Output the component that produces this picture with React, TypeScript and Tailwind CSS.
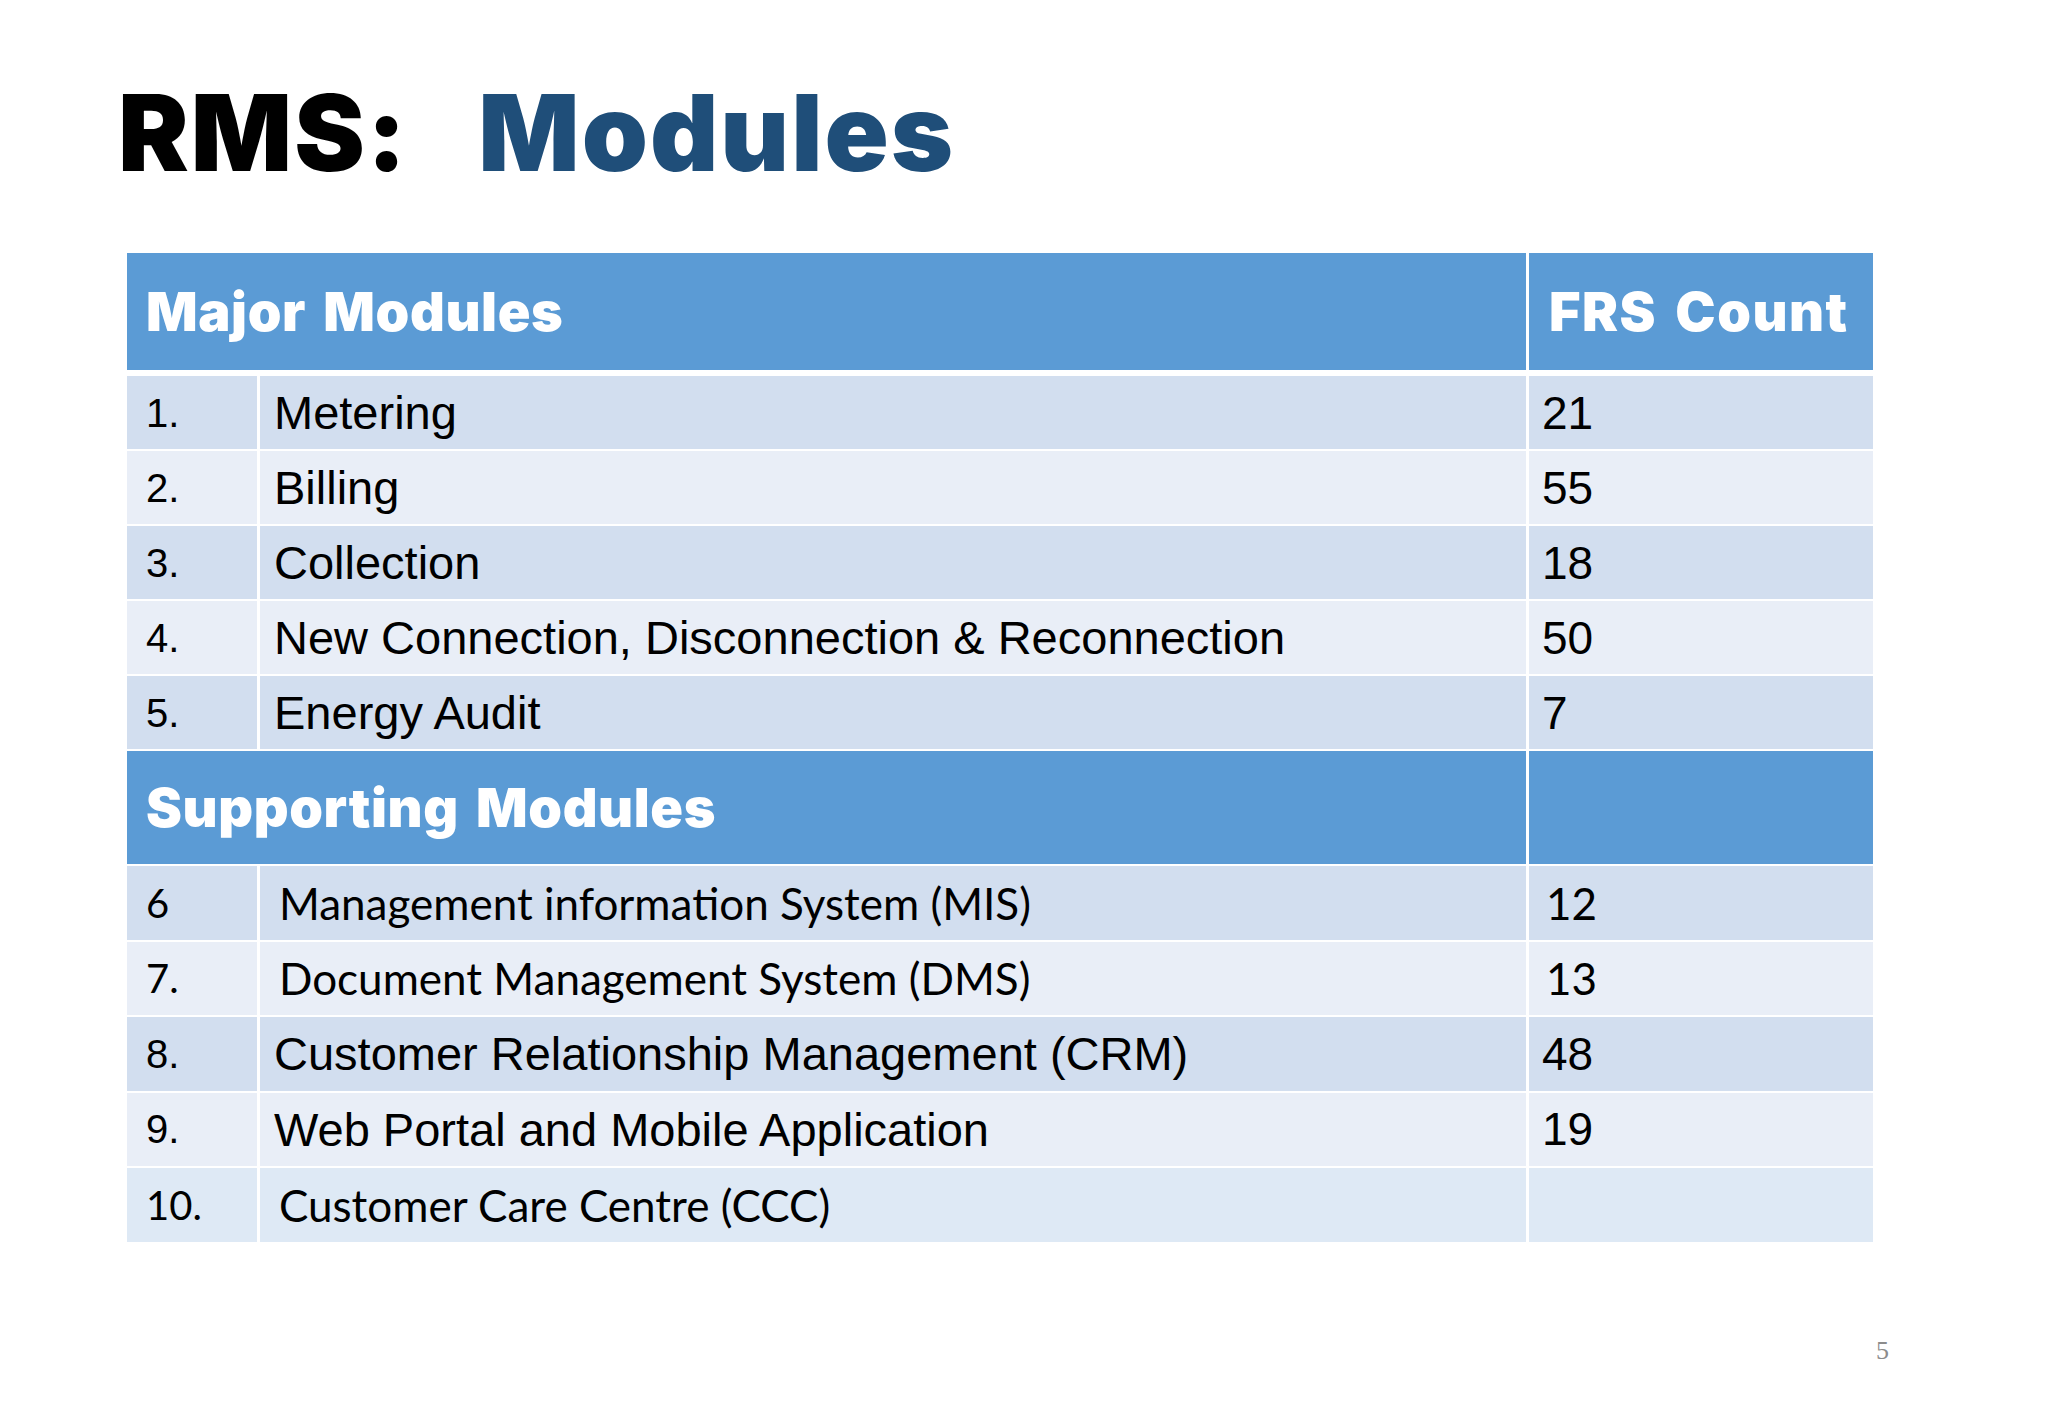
import React from "react";

type RowData = {
  num: string;
  name: string;
  count: string;
  bg: string;
  numCls: string;
  nameCls: string;
  countCls: string;
  h: string;
};

const ARIAL_NUM = "font-['Liberation_Sans',Arial,sans-serif] text-[40px] pl-[19px]";
const ARIAL_NAME = "font-['Liberation_Sans',Arial,sans-serif] text-[47px] pl-[14px]";
const ARIAL_COUNT = "font-['Liberation_Sans',Arial,sans-serif] text-[46px] pl-[13px]";
const CAL_NUM = "font-['Lato',sans-serif] text-[40px] pl-[19px]";
const CAL_NAME = "font-['Lato',sans-serif] text-[44px] pl-[19px]";
const CAL_COUNT = "font-['Lato',sans-serif] text-[44px] pl-[17px]";

const DARK = "bg-[#d2deef]";
const LIGHT = "bg-[#e9eef7]";
const LAST = "bg-[#dee9f5]";

const major: RowData[] = [
  { num: "1.", name: "Metering", count: "21", bg: DARK, numCls: ARIAL_NUM, nameCls: ARIAL_NAME, countCls: ARIAL_COUNT, h: "h-[73px]" },
  { num: "2.", name: "Billing", count: "55", bg: LIGHT, numCls: ARIAL_NUM, nameCls: ARIAL_NAME, countCls: ARIAL_COUNT, h: "h-[73px]" },
  { num: "3.", name: "Collection", count: "18", bg: DARK, numCls: ARIAL_NUM, nameCls: ARIAL_NAME, countCls: ARIAL_COUNT, h: "h-[73px]" },
  { num: "4.", name: "New Connection, Disconnection & Reconnection", count: "50", bg: LIGHT, numCls: ARIAL_NUM, nameCls: ARIAL_NAME, countCls: ARIAL_COUNT, h: "h-[73px]" },
  { num: "5.", name: "Energy Audit", count: "7", bg: DARK, numCls: ARIAL_NUM, nameCls: ARIAL_NAME, countCls: ARIAL_COUNT, h: "h-[73px]" },
];

const supporting: RowData[] = [
  { num: "6", name: "Management information System (MIS)", count: "12", bg: DARK, numCls: CAL_NUM, nameCls: CAL_NAME, countCls: CAL_COUNT, h: "h-[73.5px]" },
  { num: "7.", name: "Document Management System (DMS)", count: "13", bg: LIGHT, numCls: CAL_NUM, nameCls: CAL_NAME, countCls: CAL_COUNT, h: "h-[73.5px]" },
  { num: "8.", name: "Customer Relationship Management (CRM)", count: "48", bg: DARK, numCls: ARIAL_NUM, nameCls: ARIAL_NAME, countCls: ARIAL_COUNT, h: "h-[73.5px]" },
  { num: "9.", name: "Web Portal and Mobile Application", count: "19", bg: LIGHT, numCls: ARIAL_NUM, nameCls: ARIAL_NAME, countCls: ARIAL_COUNT, h: "h-[73.5px]" },
  { num: "10.", name: "Customer Care Centre (CCC)", count: "", bg: LAST, numCls: CAL_NUM, nameCls: CAL_NAME, countCls: CAL_COUNT, h: "h-[73.5px]" },
];

function Row({ r }: { r: RowData }) {
  return (
    <div className={`grid grid-cols-[130px_1266px_344px] gap-x-[3px] ${r.h}`}>
      <div className={`${r.bg} flex items-center text-black leading-none ${r.numCls}`}>{r.num}</div>
      <div className={`${r.bg} flex items-center text-black leading-none whitespace-nowrap ${r.nameCls}`}>{r.name}</div>
      <div className={`${r.bg} flex items-center text-black leading-none ${r.countCls}`}>{r.count}</div>
    </div>
  );
}

function HeaderRow({ left, right, h }: { left: string; right: string; h: string }) {
  return (
    <div className={`grid grid-cols-[1399px_344px] gap-x-[3px] ${h}`}>
      <div className="bg-[#5b9bd5] flex items-center pl-[19px] text-white font-['Inter',sans-serif] font-black text-[54px] leading-none tracking-[0.6px] [word-spacing:6px] whitespace-nowrap">
        {left}
      </div>
      <div className="bg-[#5b9bd5] flex items-center pl-[20px] text-white font-['Inter',sans-serif] font-black text-[54px] leading-none tracking-[1.5px] [word-spacing:6px] whitespace-nowrap">
        {right}
      </div>
    </div>
  );
}

export default function App() {
  return (
    <div className="w-[2048px] h-[1418px] bg-white relative overflow-hidden">
      <div className="pt-[80px] pl-[118px] flex items-baseline font-['Inter',sans-serif] font-black text-[106px] leading-none tracking-[2px] whitespace-nowrap">
        <span className="text-black">RMS:</span>
        <span className="text-[#1f4e79] ml-[70px]">Modules</span>
      </div>
      <div className="ml-[127px] mt-[67px] w-[1746px] flex flex-col">
        <HeaderRow left="Major Modules" right="FRS Count" h="h-[117px]" />
        <div className="h-[6px]" />
        <div className="flex flex-col gap-y-[2px]">
          {major.map((r) => (
            <Row key={r.num} r={r} />
          ))}
        </div>
        <div className="h-[2px]" />
        <HeaderRow left="Supporting Modules" right="" h="h-[113px]" />
        <div className="h-[2px]" />
        <div className="flex flex-col gap-y-[2px]">
          {supporting.map((r) => (
            <Row key={r.num} r={r} />
          ))}
        </div>
      </div>
      <div className="absolute left-[1876px] top-[1338px] font-['Liberation_Serif',serif] text-[26px] leading-none text-[#8c8c8c]">
        5
      </div>
    </div>
  );
}
